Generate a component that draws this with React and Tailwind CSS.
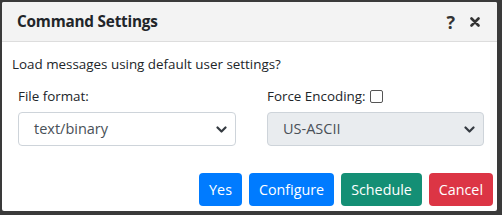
import React from "react";

const Chevron = () => (
    <svg width="11" height="7" viewBox="0 0 11 7" className="shrink-0">
        <path d="M1.5 1.5l4 4 4-4" fill="none" stroke="#343a40" strokeWidth="2.2" strokeLinecap="round" strokeLinejoin="round" />
    </svg>
);

const Select = ({ value, disabled }) => (
    <div
        className={`h-[34px] flex items-center justify-between pl-[15px] pr-[8px] border border-[#ced4da] rounded-[4px] text-[14.5px] text-[#495057] ${disabled ? "bg-[#e9ecef]" : "bg-white"}`}
    >
        <span>{value}</span>
        <Chevron />
    </div>
);

export default function App() {
    return (
        <div className="w-[502px] h-[215px] bg-[#3a3a3a] pt-[2px] pl-[2px] overflow-hidden" style={{ fontFamily: '"Segoe UI", "Open Sans", sans-serif' }}>
            <div className="w-[495px] h-[209px] bg-white rounded-[2px] flex flex-col">
                <div className="h-[40px] bg-[#f3f3f3] border-b border-[#dddddd] flex items-center pl-[15px] pr-[17px] rounded-t-[2px]">
                    <span className="text-[15.3px] font-bold text-[#212529] tracking-[-0.2px]">Command Settings</span>
                    <div className="ml-auto flex items-center gap-[15px] text-[#333] font-bold">
                        <span className="text-[18px] leading-none">?</span>
                        <svg width="10" height="10" viewBox="0 0 10 10">
                            <path d="M1.5 1.5l7 7M8.5 1.5l-7 7" stroke="#333" strokeWidth="2.6" strokeLinecap="round" />
                        </svg>
                    </div>
                </div>

                <div className="px-[10px] text-[#212529]">
                    <p className="mt-[11px] leading-[22px] text-[13.4px]">Load messages using default user settings?</p>

                    <div className="flex gap-[31px] pl-[6px] mt-[10px]">
                        <div className="w-[218px]">
                            <div className="leading-[22px] text-[13.4px]">File format:</div>
                            <div className="mt-[5px]">
                                <Select value="text/binary" />
                            </div>
                        </div>
                        <div className="w-[217px]">
                            <div className="leading-[22px] text-[13.4px] flex items-center gap-[4px]">
                                <span>Force Encoding:</span>
                                <span className="w-[13px] h-[13px] border border-[#555] rounded-[2px] bg-white inline-block" />
                            </div>
                            <div className="mt-[5px]">
                                <Select value="US-ASCII" disabled />
                            </div>
                        </div>
                    </div>

                    <div className="flex justify-end gap-[7px] mt-[27px] mr-[-6px] text-[14.3px] text-white">
                        <button className="h-[33px] px-[10px] rounded-[4px] bg-[#007bff]">Yes</button>
                        <button className="h-[33px] px-[10px] rounded-[4px] bg-[#007bff]">Configure</button>
                        <button className="h-[33px] px-[10px] rounded-[4px] bg-[#148f75]">Schedule</button>
                        <button className="h-[33px] px-[10px] rounded-[4px] bg-[#dc3545]">Cancel</button>
                    </div>
                </div>
            </div>
        </div>
    );
}
